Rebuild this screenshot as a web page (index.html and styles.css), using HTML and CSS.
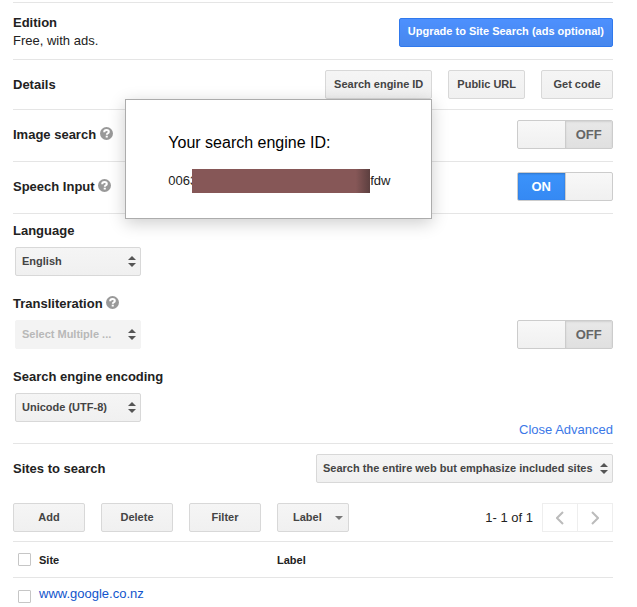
FILE: index.html
```html
<!doctype html>
<html lang="en">
  <head>
    <meta charset="UTF-8" />
    <meta name="viewport" content="width=device-width, initial-scale=1.0" />
    <title>Search engine setup</title>
    <link rel="stylesheet" href="styles.css">
  </head>
  <body>
    <svg class="sprite" aria-hidden="true">
      <symbol id="help" viewBox="0 0 13 13">
        <circle cx="6.5" cy="6.5" r="6.5" fill="#999"/>
        <path d="M4.2 5.2c0-1.4 1-2.1 2.3-2.1s2.3.7 2.3 1.8c0 1.4-2 1.4-2 2.9" fill="none" stroke="#fff" stroke-width="2"/>
        <rect x="5.7" y="8.7" width="2.1" height="1.8" fill="#fff"/>
      </symbol>
      <symbol id="updown" viewBox="0 0 8 11">
        <path d="M4 0l4 4H0zM0 7h8l-4 4z" fill="#555"/>
      </symbol>
    </svg>

    <main class="settings">
      <section class="row edition">
        <div>
          <h2>Edition</h2>
          <p>Free, with ads.</p>
        </div>
        <button class="button primary">Upgrade to Site Search (ads optional)</button>
      </section>

      <section class="row">
        <h2>Details</h2>
        <div class="buttons">
          <div class="anchor">
            <button class="button">Search engine ID</button>
            <div class="popup" role="dialog" aria-labelledby="popup-title">
              <h3 id="popup-title">Your search engine ID:</h3>
              <p class="engine-id"><span>0063</span><span class="redacted"></span><span>fdw</span></p>
            </div>
          </div>
          <button class="button">Public URL</button>
          <button class="button wide">Get code</button>
        </div>
      </section>

      <section class="row switch-row">
        <h2><label for="image-search">Image search</label> <svg class="help"><use href="#help"/></svg></h2>
        <div class="toggle">
          <input type="checkbox" id="image-search">
          <span class="on">ON</span><span class="off">OFF</span>
        </div>
      </section>

      <section class="row switch-row">
        <h2><label for="speech-input">Speech Input</label> <svg class="help"><use href="#help"/></svg></h2>
        <div class="toggle">
          <input type="checkbox" id="speech-input" checked>
          <span class="on">ON</span><span class="off">OFF</span>
        </div>
      </section>

      <section class="advanced">
        <div class="field">
          <h2><label for="language">Language</label></h2>
          <div class="select">
            <select id="language"><option>English</option></select>
            <svg class="arrows"><use href="#updown"/></svg>
          </div>
        </div>
        <div class="field">
          <h2><label for="transliteration">Transliteration</label> <svg class="help"><use href="#help"/></svg></h2>
          <div class="field-line">
            <div class="select">
              <select id="transliteration" disabled><option>Select Multiple ...</option></select>
              <svg class="arrows"><use href="#updown"/></svg>
            </div>
            <div class="toggle">
              <input type="checkbox" aria-label="Transliteration">
              <span class="on">ON</span><span class="off">OFF</span>
            </div>
          </div>
        </div>
        <div class="field">
          <h2><label for="encoding">Search engine encoding</label></h2>
          <div class="select">
            <select id="encoding"><option>Unicode (UTF-8)</option></select>
            <svg class="arrows"><use href="#updown"/></svg>
          </div>
        </div>
        <a class="close" href="#">Close Advanced</a>
      </section>

      <section class="row">
        <h2><label for="scope">Sites to search</label></h2>
        <div class="select scope">
          <select id="scope"><option>Search the entire web but emphasize included sites</option></select>
          <svg class="arrows"><use href="#updown"/></svg>
        </div>
      </section>

      <div class="toolbar">
        <div class="buttons">
          <button class="button wide">Add</button>
          <button class="button wide">Delete</button>
          <button class="button wide">Filter</button>
          <button class="button wide menu">Label <svg class="caret" viewBox="0 0 8 4"><path d="M0 0h8L4 4z" fill="#777"/></svg></button>
        </div>
        <div class="pager">
          <span>1- 1 of 1</span>
          <div class="pages">
            <button aria-label="Previous" disabled><svg viewBox="0 0 8 14"><path d="M7 1L1 7l6 6"/></svg></button>
            <button aria-label="Next" disabled><svg viewBox="0 0 8 14"><path d="M1 1l6 6-6 6"/></svg></button>
          </div>
        </div>
      </div>

      <table class="sites">
        <thead>
          <tr>
            <th class="check"><input type="checkbox" aria-label="Select all"></th>
            <th class="site">Site</th>
            <th>Label</th>
          </tr>
        </thead>
        <tbody>
          <tr>
            <td class="check"><input type="checkbox" aria-label="Select www.google.co.nz"></td>
            <td><a href="#">www.google.co.nz</a></td>
            <td></td>
          </tr>
        </tbody>
      </table>
    </main>
  </body>
</html>
```

FILE: styles.css
```css
* {
  margin: 0;
  padding: 0;
  box-sizing: border-box;
}

body {
  font-family: "Liberation Sans", Arial, sans-serif;
  font-size: 13px;
  line-height: 18px;
  color: #222;
  background: #fff;
}

.sprite {
  display: none;
}

.settings {
  padding: 2px 24px 0 13px;
}

h2 {
  font-size: 13px;
  font-weight: bold;
}

a {
  color: #15c;
  text-decoration: none;
}

.row {
  display: flex;
  align-items: center;
  justify-content: space-between;
  padding: 10px 0;
  border-top: 1px solid #e5e5e5;
}

.edition {
  padding: 11px 0 9px;
}

.switch-row {
  padding-bottom: 12px;
}

.help {
  width: 13px;
  height: 13px;
  vertical-align: -1px;
}

.buttons {
  display: flex;
  gap: 16px;
}

.button,
select {
  height: 29px;
  border: 1px solid #d8d8d8;
  border-radius: 2px;
  background: linear-gradient(#f5f5f5, #f0f0f0);
  color: #444;
  font: bold 11px "Liberation Sans", Arial, sans-serif;
}

.button {
  padding: 0 8px 2px;
  white-space: nowrap;
}

.wide {
  width: 72px;
}

.primary {
  border-color: #3079ed;
  background: linear-gradient(#4d90fe, #4787ed);
  color: #fff;
}

.menu {
  display: flex;
  align-items: center;
  justify-content: space-between;
  padding: 0 5px 2px 15px;
}

.caret {
  width: 8px;
  height: 4px;
  margin-top: 2px;
}

/* Engine ID popup */
.anchor {
  position: relative;
}

.popup {
  position: absolute;
  top: 100%;
  right: 0;
  z-index: 10;
  width: 307px;
  padding: 34px 42px 25px;
  border: 1px solid #acacac;
  background: #fff;
  box-shadow: 0 4px 16px rgba(0, 0, 0, 0.2);
  color: #000;
}

.popup h3 {
  margin-bottom: 17px;
  font-size: 16px;
  font-weight: normal;
}

.engine-id {
  display: flex;
  align-items: center;
  color: #222;
}

.redacted {
  width: 178px;
  height: 24px;
  margin-left: -5px;
  flex-shrink: 0;
  z-index: 1;
  background: linear-gradient(to right, #865757 92%, #5c3f3f);
}

/* Switches */
.toggle {
  position: relative;
  display: flex;
  width: 96px;
  height: 29px;
  border: 1px solid #ccc;
  border-radius: 2px;
  background: linear-gradient(#f8f8f8, #f0f0f0);
  font-weight: bold;
  line-height: 27px;
  text-align: center;
  overflow: hidden;
}

.toggle input {
  position: absolute;
  inset: 0;
  width: 100%;
  height: 100%;
  opacity: 0;
  cursor: pointer;
}

.toggle span {
  flex: 1;
  color: transparent;
}

.toggle input:not(:checked) ~ .off {
  border-left: 1px solid #ccc;
  background: linear-gradient(#e8e8e8, #e0e0e0);
  box-shadow: inset 0 1px 2px rgba(0, 0, 0, 0.1);
  color: #666;
}

.toggle input:checked ~ .on {
  background: linear-gradient(#3b93fb, #3589f3);
  box-shadow: inset 0 1px 2px rgba(0, 0, 0, 0.2);
  color: #fff;
}

.toggle input:checked ~ .off {
  border-left: 1px solid #ccc;
}

/* Advanced options */
.advanced {
  display: flex;
  flex-direction: column;
  gap: 19px;
  padding: 8px 0 5px;
  border-top: 1px solid #e5e5e5;
}

.field h2 {
  margin-bottom: 7px;
}

.field .select {
  width: 126px;
  margin-left: 2px;
}

.field-line {
  display: flex;
  justify-content: space-between;
}

.select {
  position: relative;
}

select {
  width: 100%;
  padding: 0 18px 2px 6px;
  appearance: none;
}

select:disabled {
  border-color: #f3f3f3;
  background: #f3f3f3;
  color: #b8b8b8;
  opacity: 1;
}

.scope select {
  padding-right: 19px;
}

.arrows {
  position: absolute;
  top: 9px;
  right: 5px;
  width: 8px;
  height: 11px;
  pointer-events: none;
}

.close {
  align-self: flex-end;
  margin-top: -19px;
  line-height: 16px;
  color: #3b78e7;
}

/* Sites list */
.toolbar {
  display: flex;
  align-items: center;
  justify-content: space-between;
  padding: 10px 0 9px;
}

.pager {
  display: flex;
  align-items: center;
  gap: 9px;
}

.pages {
  display: flex;
}

.pages button {
  display: flex;
  align-items: center;
  justify-content: center;
  width: 36px;
  height: 29px;
  border: 1px solid #eee;
  background: #fff;
}

.pages button + button {
  margin-left: -1px;
}

.pages svg {
  width: 8px;
  height: 14px;
  fill: none;
  stroke: #bbb;
  stroke-width: 2;
}

.sites {
  width: 100%;
  border-collapse: collapse;
  table-layout: fixed;
}

.sites th {
  height: 36px;
  border-top: 1px solid #e5e5e5;
  font-size: 11px;
  text-align: left;
}

.sites td {
  padding-top: 7px;
  border-top: 1px solid #e5e5e5;
  vertical-align: top;
}

.sites .check {
  width: 26px;
  padding-left: 5px;
}

.sites td.check {
  padding-top: 12px;
}

.site {
  width: 238px;
}

.sites input {
  display: block;
  width: 13px;
  height: 13px;
  border: 1px solid #c6c6c6;
  border-radius: 1px;
  appearance: none;
}
```
